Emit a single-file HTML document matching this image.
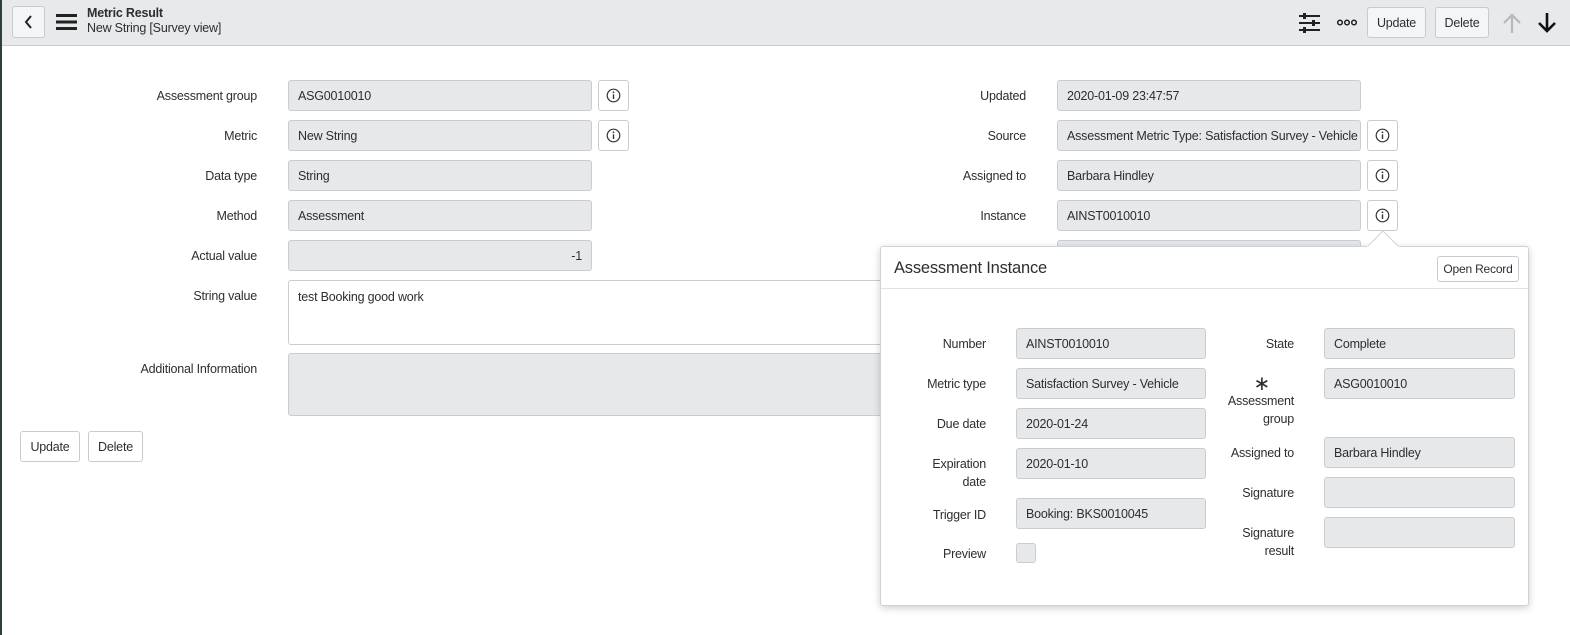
<!DOCTYPE html>
<html><head><meta charset="utf-8"><style>
*{box-sizing:border-box;margin:0;padding:0}
body{width:1570px;height:635px;overflow:hidden;background:#fff;font-family:"Liberation Sans",sans-serif;font-size:12.5px;color:#2e2e2e;position:relative;letter-spacing:-0.2px}
.lb{position:absolute;left:0;top:0;width:2px;height:635px;background:#2f3f3f;z-index:5}
.hdr{position:absolute;left:0;top:0;width:1570px;height:46px;background:#e7e9eb;border-bottom:1px solid #c9cdd1}
.a{position:absolute}
.btn{position:absolute;border:1px solid #c8ccd0;border-radius:3px;background:#f4f5f6;font-size:12.5px;display:flex;align-items:center;justify-content:center;color:#2e2e2e}
.wb{background:#fff}
.lab{position:absolute;text-align:right;font-size:12.5px;line-height:18px;color:#2e2e2e}
.in{position:absolute;height:31px;background:#e6e8ea;border:1px solid #c9cdd1;border-radius:3px;padding:0 9px;line-height:31px;font-size:12.5px;white-space:nowrap;overflow:hidden;color:#2e2e2e}
.ib{position:absolute;width:31px;height:31px;border:1px solid #c9cdd1;border-radius:3px;background:#fff;display:flex;align-items:center;justify-content:center}
</style></head><body>
<div class="lb"></div>
<div class="hdr">
 <div class="btn" style="left:12px;top:6px;width:33px;height:32px;background:#f4f5f6"><svg width="12" height="14" viewBox="0 0 12 14"><path d="M8 1L3 7l5 6" fill="none" stroke="#222" stroke-width="2"/></svg></div>
 <svg class="a" style="left:56px;top:14px" width="21" height="16"><rect y="0" width="21" height="3" fill="#222"/><rect y="6.5" width="21" height="3" fill="#222"/><rect y="13" width="21" height="3" fill="#222"/></svg>
 <div class="a" style="left:87px;top:6px;font-weight:bold;font-size:12.5px">Metric Result</div>
 <div class="a" style="left:87px;top:21px;font-size:12.5px">New String [Survey view]</div>
 <svg class="a" style="left:1299px;top:13px" width="21" height="21" viewBox="0 0 21 21"><g stroke="#222" stroke-width="2"><line x1="0" y1="3" x2="21" y2="3"/><line x1="0" y1="10" x2="21" y2="10"/><line x1="0" y1="17" x2="21" y2="17"/></g><rect x="4" y="0" width="3" height="6" fill="#222"/><rect x="13" y="7" width="3" height="6" fill="#222"/><rect x="4" y="14" width="3" height="6" fill="#222"/></svg>
 <svg class="a" style="left:1337px;top:19px" width="20" height="7"><g fill="none" stroke="#222" stroke-width="1.5"><circle cx="3" cy="3.5" r="2.3"/><circle cx="10" cy="3.5" r="2.3"/><circle cx="17" cy="3.5" r="2.3"/></g></svg>
 <div class="btn" style="left:1367px;top:7px;width:59px;height:31px">Update</div>
 <div class="btn" style="left:1435px;top:7px;width:54px;height:31px">Delete</div>
 <svg class="a" style="left:1503px;top:13px" width="18" height="20" viewBox="0 0 18 20"><path d="M9 20V2M1 10l8-8 8 8" fill="none" stroke="#b5b9bd" stroke-width="2.2"/></svg>
 <svg class="a" style="left:1538px;top:13px" width="18" height="20" viewBox="0 0 18 20"><path d="M9 0v18M1 10l8 8 8-8" fill="none" stroke="#111" stroke-width="2.6"/></svg>
</div>

<div class="lab" style="left:60px;width:197px;top:87px">Assessment group</div>
<div class="in" style="left:288px;top:80px;width:304px">ASG0010010</div>
<div class="ib" style="left:598px;top:80px"><svg width="15" height="15" viewBox="0 0 15 15"><circle cx="7.5" cy="7.5" r="6.3" fill="none" stroke="#333" stroke-width="1.2"/><rect x="6.8" y="6.3" width="1.4" height="4.7" fill="#333"/><circle cx="7.5" cy="4.3" r=".9" fill="#333"/></svg></div>
<div class="lab" style="left:60px;width:197px;top:127px">Metric</div>
<div class="in" style="left:288px;top:120px;width:304px">New String</div>
<div class="ib" style="left:598px;top:120px"><svg width="15" height="15" viewBox="0 0 15 15"><circle cx="7.5" cy="7.5" r="6.3" fill="none" stroke="#333" stroke-width="1.2"/><rect x="6.8" y="6.3" width="1.4" height="4.7" fill="#333"/><circle cx="7.5" cy="4.3" r=".9" fill="#333"/></svg></div>
<div class="lab" style="left:60px;width:197px;top:167px">Data type</div>
<div class="in" style="left:288px;top:160px;width:304px">String</div>
<div class="lab" style="left:60px;width:197px;top:207px">Method</div>
<div class="in" style="left:288px;top:200px;width:304px">Assessment</div>
<div class="lab" style="left:60px;width:197px;top:247px">Actual value</div>
<div class="in" style="left:288px;top:240px;width:304px;text-align:right">-1</div>
<div class="lab" style="left:60px;width:197px;top:287px">String value</div>
<div class="in" style="left:288px;top:280px;width:620px;height:65px;background:#fff;line-height:18px;padding-top:7px">test Booking good work</div>
<div class="lab" style="left:60px;width:197px;top:360px">Additional Information</div>
<div class="in" style="left:288px;top:353px;width:620px;height:63px"></div>
<div class="btn wb" style="left:20px;top:431px;width:60px;height:31px">Update</div>
<div class="btn wb" style="left:88px;top:431px;width:55px;height:31px">Delete</div>

<div class="lab" style="left:830px;width:196px;top:87px">Updated</div>
<div class="in" style="left:1057px;top:80px;width:304px">2020-01-09 23:47:57</div>
<div class="lab" style="left:830px;width:196px;top:127px">Source</div>
<div class="in" style="left:1057px;top:120px;width:304px">Assessment Metric Type: Satisfaction Survey - Vehicle</div>
<div class="ib" style="left:1367px;top:120px"><svg width="15" height="15" viewBox="0 0 15 15"><circle cx="7.5" cy="7.5" r="6.3" fill="none" stroke="#333" stroke-width="1.2"/><rect x="6.8" y="6.3" width="1.4" height="4.7" fill="#333"/><circle cx="7.5" cy="4.3" r=".9" fill="#333"/></svg></div>
<div class="lab" style="left:830px;width:196px;top:167px">Assigned to</div>
<div class="in" style="left:1057px;top:160px;width:304px">Barbara Hindley</div>
<div class="ib" style="left:1367px;top:160px"><svg width="15" height="15" viewBox="0 0 15 15"><circle cx="7.5" cy="7.5" r="6.3" fill="none" stroke="#333" stroke-width="1.2"/><rect x="6.8" y="6.3" width="1.4" height="4.7" fill="#333"/><circle cx="7.5" cy="4.3" r=".9" fill="#333"/></svg></div>
<div class="lab" style="left:830px;width:196px;top:207px">Instance</div>
<div class="in" style="left:1057px;top:200px;width:304px">AINST0010010</div>
<div class="ib" style="left:1367px;top:200px"><svg width="15" height="15" viewBox="0 0 15 15"><circle cx="7.5" cy="7.5" r="6.3" fill="none" stroke="#333" stroke-width="1.2"/><rect x="6.8" y="6.3" width="1.4" height="4.7" fill="#333"/><circle cx="7.5" cy="4.3" r=".9" fill="#333"/></svg></div>
<div class="in" style="left:1057px;top:240px;width:304px"></div>

<div class="a" style="left:880px;top:246px;width:649px;height:360px;background:#fff;border:1px solid #d0d3d6;border-radius:3px;box-shadow:0 2px 8px rgba(0,0,0,.2)">
 <div class="a" style="left:13px;top:12px;font-size:16.5px;color:#2e2e2e">Assessment Instance</div>
 <div class="a" style="left:0;top:41px;width:647px;height:1px;background:#e0e2e4"></div>
 <div class="btn wb" style="left:556px;top:9px;width:82px;height:26px;font-size:12px">Open Record</div>
</div>
<svg class="a" style="left:1367px;top:230px" width="32" height="18"><path d="M0 17L16 1 32 17" fill="#fff" stroke="#d0d3d6"/><rect x="0" y="16" width="32" height="3" fill="#fff"/></svg>

<div class="lab" style="left:880px;width:106px;top:335px">Number</div>
<div class="in" style="left:1016px;top:328px;width:190px">AINST0010010</div>
<div class="lab" style="left:880px;width:106px;top:375px">Metric type</div>
<div class="in" style="left:1016px;top:368px;width:190px">Satisfaction Survey - Vehicle</div>
<div class="lab" style="left:880px;width:106px;top:415px">Due date</div>
<div class="in" style="left:1016px;top:408px;width:190px">2020-01-24</div>
<div class="lab" style="left:880px;width:106px;top:455px">Expiration<br>date</div>
<div class="in" style="left:1016px;top:448px;width:190px">2020-01-10</div>
<div class="lab" style="left:880px;width:106px;top:506px">Trigger ID</div>
<div class="in" style="left:1016px;top:498px;width:190px">Booking: BKS0010045</div>
<div class="lab" style="left:880px;width:106px;top:545px">Preview</div>
<div class="in" style="left:1016px;top:543px;width:20px;height:20px;padding:0"></div>

<div class="lab" style="left:1180px;width:114px;top:335px">State</div>
<div class="in" style="left:1324px;top:328px;width:191px">Complete</div>
<div class="lab" style="left:1180px;width:114px;top:376px;line-height:18px"><span style="font-size:20px;line-height:16px;display:block;text-align:right;padding-right:24px">∗</span>Assessment<br>group</div>
<div class="in" style="left:1324px;top:368px;width:191px">ASG0010010</div>
<div class="lab" style="left:1180px;width:114px;top:444px">Assigned to</div>
<div class="in" style="left:1324px;top:437px;width:191px">Barbara Hindley</div>
<div class="lab" style="left:1180px;width:114px;top:484px">Signature</div>
<div class="in" style="left:1324px;top:477px;width:191px"></div>
<div class="lab" style="left:1180px;width:114px;top:524px">Signature<br>result</div>
<div class="in" style="left:1324px;top:517px;width:191px"></div>
</body></html>
